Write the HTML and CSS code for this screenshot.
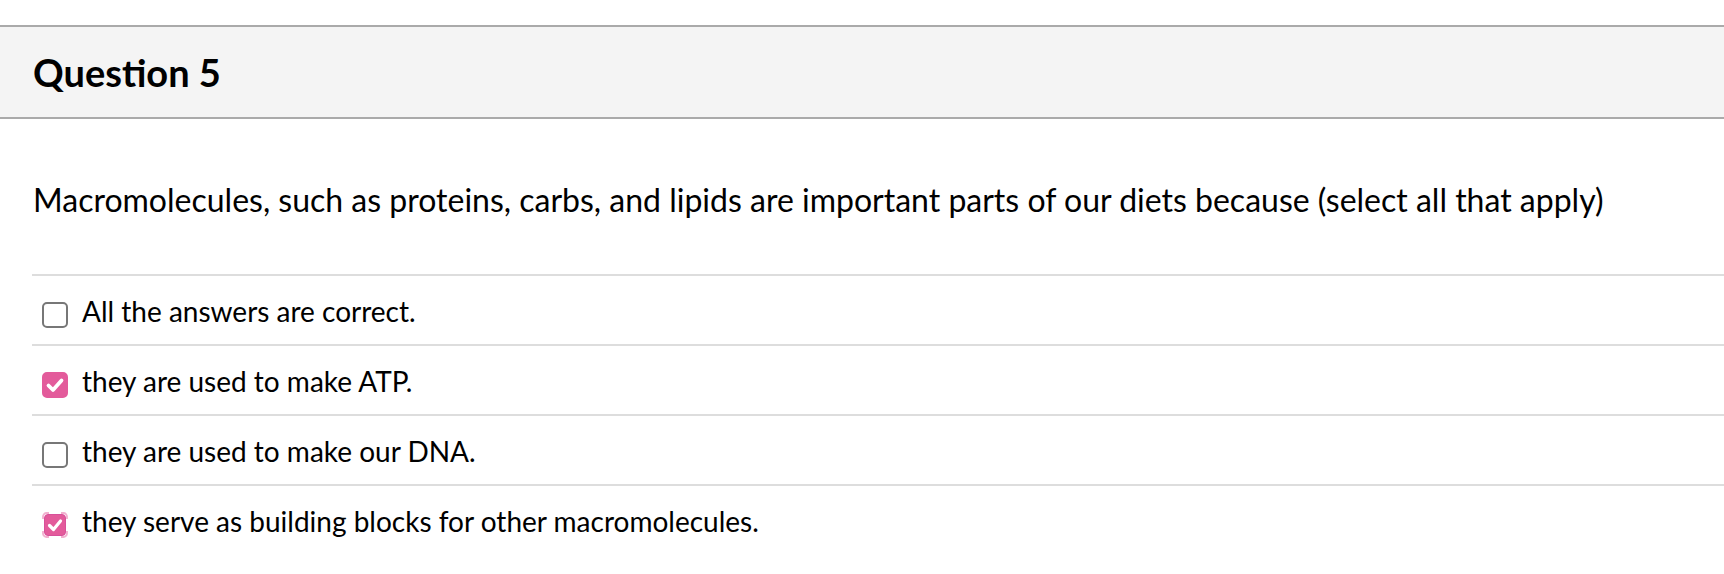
FILE: index.html
```html
<!DOCTYPE html>
<html lang="en">
<head>
<meta charset="utf-8">
<title>Question 5</title>
<link rel="stylesheet" href="styles.css">
</head>
<body>
<div class="question">
  <div class="q-header">
    <h2 class="q-title">Question 5</h2>
  </div>
  <div class="q-body">
    <p class="q-text">Macromolecules, such as proteins, carbs, and lipids are important parts of our diets because (select all that apply)</p>
    <ul class="answers">
      <li class="answer">
        <span class="box"></span>
        <span class="label">All the answers are correct.</span>
      </li>
      <li class="answer">
        <span class="box checked"><svg viewBox="0 0 26 26" class="tick"><polyline points="6.5,13.5 11,18 19.5,8.5" /></svg></span>
        <span class="label">they are used to make ATP.</span>
      </li>
      <li class="answer">
        <span class="box"></span>
        <span class="label">they are used to make our DNA.</span>
      </li>
      <li class="answer">
        <span class="box focusing">
          <svg viewBox="0 0 26 26" class="corners"><path d="M1,7 V4.5 A3.5,3.5 0 0 1 4.5,1 H7 M19,1 H21.5 A3.5,3.5 0 0 1 25,4.5 V7 M25,19 V21.5 A3.5,3.5 0 0 1 21.5,25 H19 M7,25 H4.5 A3.5,3.5 0 0 1 1,21.5 V19" /></svg>
          <span class="inner"><svg viewBox="0 0 22 22" class="tick small"><polyline points="5.5,11.5 9.5,15.5 16.5,7" /></svg></span>
        </span>
        <span class="label">they serve as building blocks for other macromolecules.</span>
      </li>
    </ul>
  </div>
</div>
</body>
</html>
```

FILE: styles.css
```css
html, body {
  margin: 0;
  padding: 0;
  background: #ffffff;
}

body {
  font-family: Lato, "Liberation Sans", sans-serif;
  color: #000;
}

.question {
  padding-top: 25px;
}

.q-header {
  background: #f4f4f4;
  border-top: 2px solid #aaaaaa;
  border-bottom: 2px solid #aaaaaa;
  height: 90px;
  display: flex;
  align-items: center;
  padding-left: 33px;
}

.q-title {
  margin: 0;
  font-size: 38px;
  font-weight: 700;
  line-height: 1;
}

.q-body {
  padding: 0 0 0 32px;
}

.q-text {
  margin: 0;
  padding: 61px 0 0 1px;
  height: 155px;
  box-sizing: border-box;
  font-size: 32px;
  line-height: 40px;
}

.answers {
  list-style: none;
  margin: 0;
  padding: 0;
}

.answer {
  border-top: 2px solid #dddddd;
  height: 70px;
  box-sizing: border-box;
  padding: 26px 0 0 10px;
  display: flex;
  align-items: flex-start;
  gap: 14px;
}

.box {
  width: 26px;
  height: 26px;
  box-sizing: border-box;
  border: 2px solid #777777;
  border-radius: 5px;
  background: #fff;
  flex: none;
  position: relative;
}

.box.checked {
  background: #e35b9b;
  border-color: #e35b9b;
}

.tick {
  display: block;
  width: 26px;
  height: 26px;
  margin: -2px;
  fill: none;
  stroke: #fff;
  stroke-width: 3.8;
  stroke-linecap: round;
  stroke-linejoin: round;
}

.box.focusing {
  border: none;
  background: transparent;
  display: flex;
  align-items: center;
  justify-content: center;
}

.corners {
  position: absolute;
  inset: 0;
  width: 26px;
  height: 26px;
  fill: none;
  stroke: #f2b0cf;
  stroke-width: 1.8;
}

.box.focusing .inner {
  position: relative;
  width: 22px;
  height: 22px;
  box-sizing: border-box;
  border-radius: 4px;
  background: #e35b9b;
  border: 1.5px solid #d8509a;
}

.tick.small {
  width: 22px;
  height: 22px;
  margin: -1.5px;
  stroke-width: 3.2;
}

.label {
  font-size: 28px;
  line-height: 26px;
  margin-top: -4px;
}
```
